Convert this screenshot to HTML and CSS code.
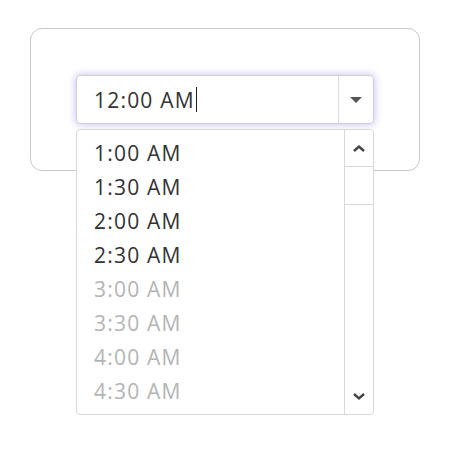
FILE: index.html
```html
<!DOCTYPE html>
<html lang="en">
<head>
  <meta charset="UTF-8">
  <meta name="viewport" content="width=device-width, initial-scale=1.0">
  <title>Time Picker</title>
  <link rel="stylesheet" href="styles.css">
</head>
<body>

  <div class="card">
    <div class="picker">
      <div class="picker-input">
        <div class="value">12:00 AM<span class="caret"></span></div>
        <div class="toggle"><span class="triangle"></span></div>
      </div>

      <!-- Dropdown list -->
      <div class="dropdown">
        <ul class="options">
          <li>1:00 AM</li>
          <li>1:30 AM</li>
          <li>2:00 AM</li>
          <li>2:30 AM</li>
          <li class="disabled">3:00 AM</li>
          <li class="disabled">3:30 AM</li>
          <li class="disabled">4:00 AM</li>
          <li class="disabled">4:30 AM</li>
        </ul>
        <div class="scrollbar">
          <div class="scroll-btn">
            <svg width="14" height="9" viewBox="0 0 14 9"><path d="M2 7 L7 2.5 L12 7" fill="none" stroke="#444" stroke-width="2.4"/></svg>
          </div>
          <div class="thumb"></div>
          <div class="scroll-btn down">
            <svg width="14" height="9" viewBox="0 0 14 9"><path d="M2 2 L7 6.5 L12 2" fill="none" stroke="#444" stroke-width="2.4"/></svg>
          </div>
        </div>
      </div>
    </div>
  </div>

</body>
</html>
```

FILE: styles.css
```css
html, body {
  min-height: 459px;
}

body {
  margin: 0;
  background: #fff;
  font-family: 'Open Sans', sans-serif;
  color: #333;
}

.card {
  margin: 28px 0 0 30px;
  width: 298px;
  padding: 46px 45px;
  border: 1px solid #c8c8c8;
  border-radius: 12px;
}

.picker {
  position: relative;
}

.picker-input {
  display: flex;
  height: 47px;
  border: 1px solid #cfcce4;
  border-radius: 4px;
  box-shadow: 0 0 8px rgba(100, 85, 200, 0.4);
  background: #fff;
}

.value {
  flex: 1;
  display: flex;
  align-items: center;
  padding-left: 17px;
  font-size: 21px;
  letter-spacing: 1.2px;
  color: #333;
}

.caret {
  display: inline-block;
  width: 1px;
  height: 25px;
  background: #222;
  margin-left: 1px;
}

.toggle {
  width: 34px;
  border-left: 1px solid #ddd;
  display: flex;
  align-items: center;
  justify-content: center;
}

.triangle {
  width: 0;
  height: 0;
  border-left: 6px solid transparent;
  border-right: 6px solid transparent;
  border-top: 6px solid #555;
}

.dropdown {
  position: absolute;
  top: 54px;
  left: 0;
  width: 296px;
  height: 284px;
  border: 1px solid #d8d8d8;
  border-radius: 4px;
  background: #fff;
  display: flex;
  overflow: hidden;
  z-index: 2;
}

.options {
  flex: 1;
  margin: 0;
  padding: 6px 0 0;
  list-style: none;
}

.options li {
  height: 34px;
  line-height: 34px;
  padding-left: 17px;
  font-size: 21px;
  letter-spacing: 1.2px;
}

.options li.disabled {
  color: #b4b4b4;
}

.scrollbar {
  width: 28px;
  border-left: 1px solid #d8d8d8;
  display: flex;
  flex-direction: column;
}

.scroll-btn {
  height: 36px;
  display: flex;
  align-items: center;
  justify-content: center;
}

.scroll-btn.down {
  margin-top: auto;
  padding-top: 3px;
}

.thumb {
  height: 37px;
  border-top: 1px solid #d8d8d8;
  border-bottom: 1px solid #d8d8d8;
}
```
